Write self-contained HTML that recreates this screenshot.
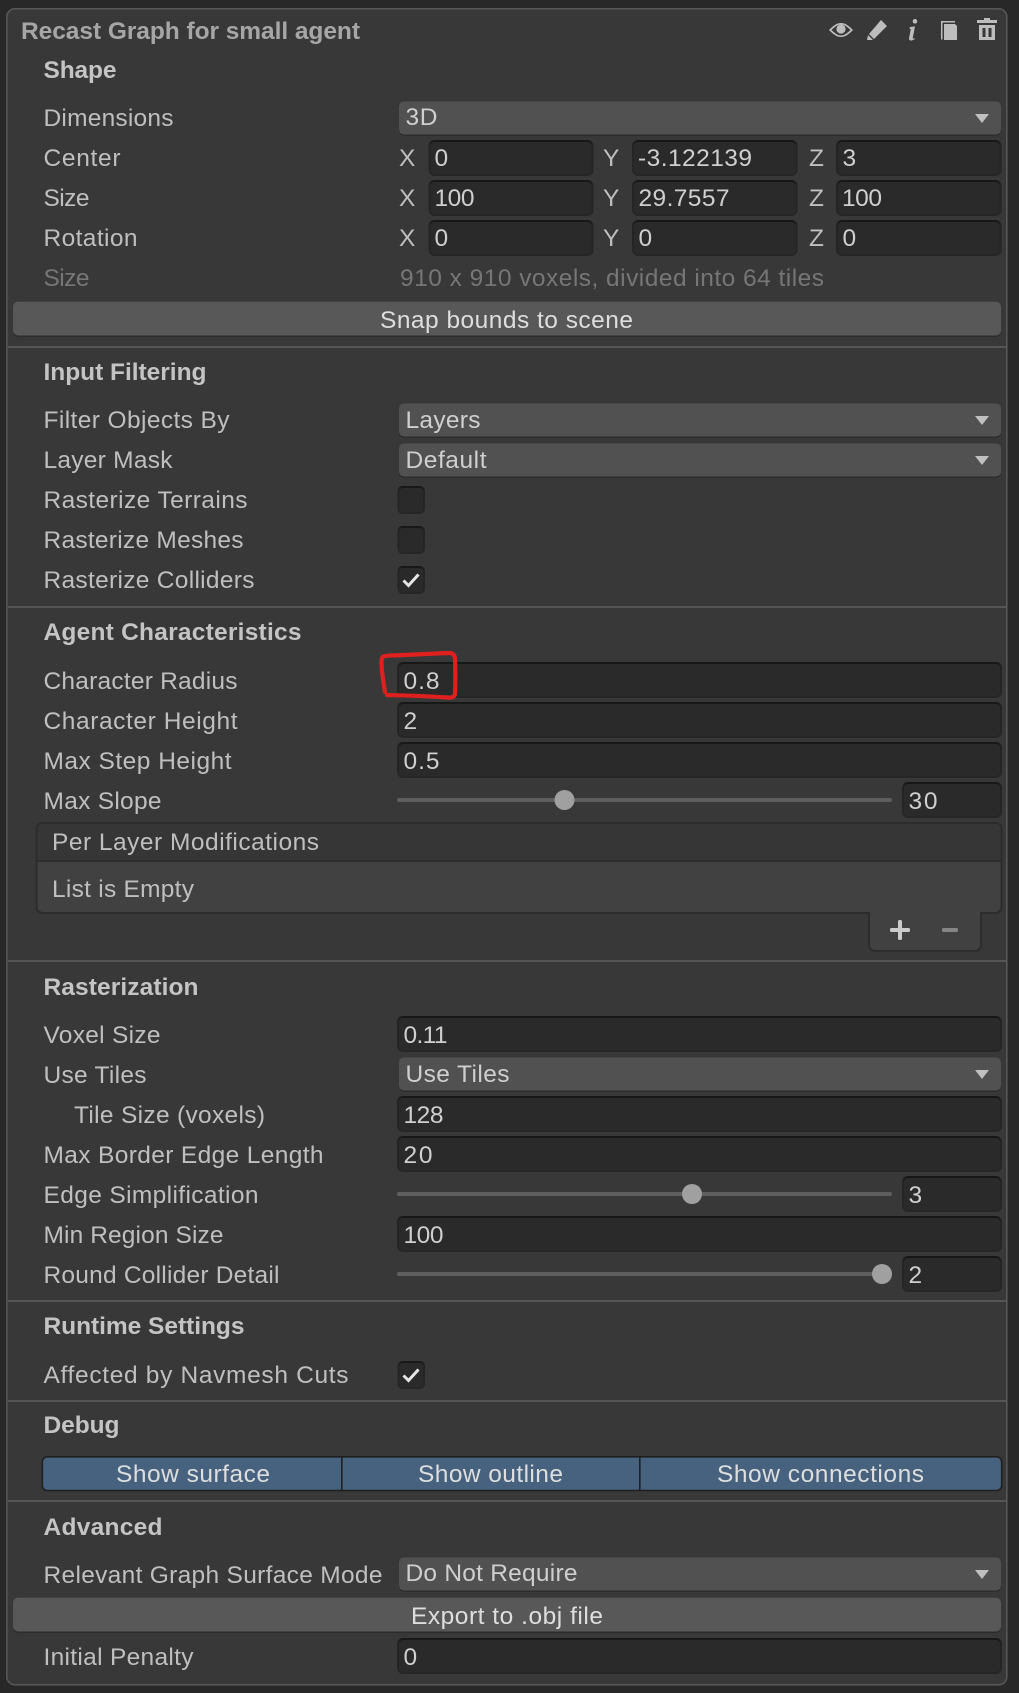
<!DOCTYPE html>
<html><head><meta charset="utf-8"><title>Recast Graph</title>
<style>
html,body{margin:0;padding:0;background:#282828;width:1019px;height:1693px;overflow:hidden}
svg{display:block}
text{font-family:"Liberation Sans",sans-serif;font-size:24.5px;fill:#bfbfbf}
.b{font-weight:bold;fill:#c4c4c4}
.t{font-weight:bold;fill:#a6a6a6}
.g{fill:#767676}
.v{fill:#cfcfcf}
.w{fill:#dedede}
.f{fill:#2a2a2a;stroke:url(#fs);stroke-width:2}
.dd{fill:#2c2c2c}
.d{fill:#515151}
.bt{fill:#585858}
.line{fill:#555555}
.tr{fill:#5e5e5e}
.th{fill:#a0a0a0}
.ar{fill:#c0c0c0}
</style></head><body>
<svg width="1019" height="1693" viewBox="0 0 1019 1693" xmlns="http://www.w3.org/2000/svg">
<defs><linearGradient id="fs" x1="0" y1="0" x2="0" y2="1"><stop offset="0" stop-color="#171717"/><stop offset=".12" stop-color="#232323"/><stop offset="1" stop-color="#262626"/></linearGradient></defs>
<rect width="1019" height="1693" fill="#282828"/>
<rect x="6.800" y="8.800" width="1000" height="1676" rx="8" fill="#383838" stroke="#565656" stroke-width="1.600"/>

<!-- header -->
<text class="t" x="21" y="39" textLength="339">Recast Graph for small agent</text>
<g fill="#bdbdbd">
<path fill-rule="evenodd" d="M829 30c5-5 8-7 12-7s7 2 12 7c-5 5-8 7-12 7s-7-2-12-7zm2.500 0c4 4 7 5.500 9.500 5.500s5.500-1.500 9.500-5.500c-4-4-7-5.500-9.500-5.500s-5.500 1.500-9.500 5.500z"/>
<circle cx="841" cy="29" r="4.600"/>
<path d="M881 20l6 6-13 13-5-5zM868 35l5 5-6 0z"/>
<path d="M915 19a2.300 2.300 0 1 1-.1 4.600a2.300 2.300 0 0 1 .1-4.600zM910 27l5-.6-2.200 11.500c-.1 1 .6 1 1.700.2l.5.7c-2 2-6 3-6-.5l1.800-9.400-1.500-.3z"/>
<path d="M941 21h14v1.500h-12.500v17h-1.500zM944 24h11l2 2v14h-13z"/>
<path fill-rule="evenodd" d="M984 18h6v2h7v3h-20v-3h7zM979 25h16v15h-16zm3.500 3v9h3v-9zm6 0v9h3v-9z"/>
</g>

<!-- Shape -->
<text class="b" x="43.500" y="78" textLength="73">Shape</text>
<text x="43.500" y="126" textLength="130">Dimensions</text>
<rect class="dd" x="399" y="102" width="602" height="34" rx="5"/><rect class="d" x="399" y="101.500" width="602" height="33" rx="5"/>
<text class="v" x="405.500" y="125" textLength="32">3D</text>
<path class="ar" d="M975 114h14l-7 9z"/>

<text x="43.500" y="166" textLength="77">Center</text>
<text x="43.500" y="206" textLength="46">Size</text>
<text x="43.500" y="246" textLength="94">Rotation</text>
<text class="g" x="43.500" y="286" textLength="46">Size</text>

<g>
<text x="399" y="166" textLength="16">X</text><text x="399" y="206" textLength="16">X</text><text x="399" y="246" textLength="16">X</text>
<text x="603" y="166" textLength="16">Y</text><text x="603" y="206" textLength="16">Y</text><text x="603" y="246" textLength="16">Y</text>
<text x="809" y="166" textLength="14">Z</text><text x="809" y="206" textLength="14">Z</text><text x="809" y="246" textLength="14">Z</text>
</g>
<rect class="f" x="429.500" y="141" width="163" height="34" rx="5"/><rect class="f" x="633" y="141" width="163.500" height="34" rx="5"/><rect class="f" x="837" y="141" width="163.500" height="34" rx="5"/>
<rect class="f" x="429.500" y="181" width="163" height="34" rx="5"/><rect class="f" x="633" y="181" width="163.500" height="34" rx="5"/><rect class="f" x="837" y="181" width="163.500" height="34" rx="5"/>
<rect class="f" x="429.500" y="221" width="163" height="34" rx="5"/><rect class="f" x="633" y="221" width="163.500" height="34" rx="5"/><rect class="f" x="837" y="221" width="163.500" height="34" rx="5"/>
<text class="v" x="434.500" y="166">0</text><text class="v" x="638" y="166" textLength="114">-3.122139</text><text class="v" x="842.500" y="166">3</text>
<text class="v" x="434.500" y="206" textLength="40">100</text><text class="v" x="638.500" y="206" textLength="91">29.7557</text><text class="v" x="842" y="206" textLength="40">100</text>
<text class="v" x="434.500" y="246">0</text><text class="v" x="638.500" y="246">0</text><text class="v" x="842.500" y="246">0</text>

<text class="g" x="400" y="286" textLength="424">910 x 910 voxels, divided into 64 tiles</text>
<rect class="dd" x="13" y="301" width="988" height="36" rx="5"/><rect class="bt" x="13" y="301.500" width="988" height="34" rx="5"/>
<text class="w" x="380" y="328" textLength="253">Snap bounds to scene</text>

<rect class="line" x="8" y="346" width="998" height="2"/>

<!-- Input Filtering -->
<text class="b" x="43.500" y="380" textLength="163">Input Filtering</text>
<text x="43.500" y="428" textLength="186">Filter Objects By</text>
<text x="43.500" y="468" textLength="129">Layer Mask</text>
<text x="43.500" y="508" textLength="204">Rasterize Terrains</text>
<text x="43.500" y="548" textLength="200">Rasterize Meshes</text>
<text x="43.500" y="588" textLength="211">Rasterize Colliders</text>
<rect class="dd" x="399" y="404" width="602" height="34" rx="5"/><rect class="d" x="399" y="403.500" width="602" height="33" rx="5"/>
<text class="v" x="405.500" y="428" textLength="75">Layers</text><path class="ar" d="M975 416h14l-7 9z"/>
<rect class="dd" x="399" y="444" width="602" height="34" rx="5"/><rect class="d" x="399" y="443.500" width="602" height="33" rx="5"/>
<text class="v" x="405.500" y="468" textLength="81">Default</text><path class="ar" d="M975 456h14l-7 9z"/>
<rect class="f" x="398.500" y="487" width="25.500" height="26" rx="4"/>
<rect class="f" x="398.500" y="527" width="25.500" height="26" rx="4"/>
<rect class="f" x="398.500" y="567" width="25.500" height="26" rx="4"/>
<path d="M403.500 580.500l5 5 10-11" fill="none" stroke="#e6e6e6" stroke-width="3"/>

<rect class="line" x="8" y="606" width="998" height="2"/>

<!-- Agent -->
<text class="b" x="43.500" y="640" textLength="258">Agent Characteristics</text>
<text x="43.500" y="689" textLength="194">Character Radius</text>
<text x="43.500" y="729" textLength="194">Character Height</text>
<text x="43.500" y="769" textLength="188">Max Step Height</text>
<text x="43.500" y="809" textLength="118">Max Slope</text>
<rect class="f" x="398" y="663" width="603" height="34" rx="5"/>
<rect class="f" x="398" y="703" width="603" height="34" rx="5"/>
<rect class="f" x="398" y="743" width="603" height="34" rx="5"/>
<text class="v" x="403.500" y="689" textLength="36">0.8</text>
<text class="v" x="403.500" y="729">2</text>
<text class="v" x="403.500" y="769" textLength="36">0.5</text>
<rect class="tr" x="397" y="798" width="495" height="4" rx="2"/>
<circle class="th" cx="564.500" cy="800" r="10"/>
<rect class="f" x="903" y="783" width="98" height="34" rx="5"/>
<text class="v" x="908.500" y="809" textLength="29">30</text>

<!-- list -->
<path d="M869 912v33a6 6 0 0 0 6 6h100a6 6 0 0 0 6-6v-33z" fill="#414141" stroke="#2c2c2c" stroke-width="2"/>
<rect x="36.500" y="823" width="965" height="90" rx="6" fill="#414141" stroke="#2c2c2c" stroke-width="2"/>
<path d="M37.500 860v-31a5 5 0 0 1 5-5h953a5 5 0 0 1 5 5v31z" fill="#363636"/>
<rect x="36.500" y="860" width="965" height="2" fill="#2c2c2c"/>
<rect x="870" y="911" width="110" height="4" fill="#414141"/>
<text x="52" y="850" textLength="267">Per Layer Modifications</text>
<text x="52" y="897" textLength="142">List is Empty</text>
<rect x="890" y="928" width="20" height="4" rx="1.500" fill="#cbcbcb"/><rect x="898" y="920" width="4" height="20" rx="1.500" fill="#cbcbcb"/>
<rect x="942" y="928" width="16" height="4" rx="1.500" fill="#858585"/>

<rect class="line" x="8" y="960" width="998" height="2"/>

<!-- Rasterization -->
<text class="b" x="43.500" y="995" textLength="155">Rasterization</text>
<text x="43.500" y="1043" textLength="117">Voxel Size</text>
<text x="43.500" y="1083" textLength="103">Use Tiles</text>
<text x="74" y="1123" textLength="191">Tile Size (voxels)</text>
<text x="43.500" y="1163" textLength="280">Max Border Edge Length</text>
<text x="43.500" y="1203" textLength="215">Edge Simplification</text>
<text x="43.500" y="1243" textLength="180">Min Region Size</text>
<text x="43.500" y="1283" textLength="236">Round Collider Detail</text>
<rect class="f" x="398" y="1017" width="603" height="34" rx="5"/>
<text class="v" x="403.500" y="1043" textLength="44">0.11</text>
<rect class="dd" x="399" y="1058" width="602" height="34" rx="5"/><rect class="d" x="399" y="1057.500" width="602" height="33" rx="5"/>
<text class="v" x="405.500" y="1082" textLength="104">Use Tiles</text><path class="ar" d="M975 1070h14l-7 9z"/>
<rect class="f" x="398" y="1097" width="603" height="34" rx="5"/>
<text class="v" x="403.500" y="1123" textLength="40">128</text>
<rect class="f" x="398" y="1137" width="603" height="34" rx="5"/>
<text class="v" x="403.500" y="1163" textLength="29">20</text>
<rect class="tr" x="397" y="1192" width="495" height="4" rx="2"/>
<circle class="th" cx="692" cy="1194" r="10"/>
<rect class="f" x="903" y="1177" width="98" height="34" rx="5"/>
<text class="v" x="908.500" y="1203">3</text>
<rect class="f" x="398" y="1217" width="603" height="34" rx="5"/>
<text class="v" x="403.500" y="1243" textLength="40">100</text>
<rect class="tr" x="397" y="1272" width="495" height="4" rx="2"/>
<circle class="th" cx="882" cy="1274" r="10"/>
<rect class="f" x="903" y="1257" width="98" height="34" rx="5"/>
<text class="v" x="908.500" y="1283">2</text>

<rect class="line" x="8" y="1300" width="998" height="2"/>

<!-- Runtime -->
<text class="b" x="43.500" y="1334" textLength="201">Runtime Settings</text>
<text x="43.500" y="1383" textLength="305">Affected by Navmesh Cuts</text>
<rect class="f" x="398.500" y="1362" width="25.500" height="26" rx="4"/>
<path d="M403.500 1375.500l5 5 10-11" fill="none" stroke="#e6e6e6" stroke-width="3"/>

<rect class="line" x="8" y="1400" width="998" height="2"/>

<!-- Debug -->
<text class="b" x="43.500" y="1433" textLength="76">Debug</text>
<rect x="42.300" y="1456.800" width="959.400" height="33.700" rx="5" fill="#46627f" stroke="#1f1f1f" stroke-width="1.600"/>
<rect x="341" y="1457" width="1.600" height="33" fill="#1f1f1f"/>
<rect x="639" y="1457" width="1.600" height="33" fill="#1f1f1f"/>
<text class="w" x="116" y="1482" textLength="154">Show surface</text>
<text class="w" x="418" y="1482" textLength="145">Show outline</text>
<text class="w" x="717" y="1482" textLength="207">Show connections</text>

<rect class="line" x="8" y="1500" width="998" height="2"/>

<!-- Advanced -->
<text class="b" x="43.500" y="1535" textLength="119">Advanced</text>
<text x="43.500" y="1583" textLength="339">Relevant Graph Surface Mode</text>
<rect class="dd" x="399" y="1558" width="602" height="34" rx="5"/><rect class="d" x="399" y="1557.500" width="602" height="33" rx="5"/>
<text class="v" x="405.500" y="1581" textLength="172">Do Not Require</text><path class="ar" d="M975 1570h14l-7 9z"/>
<rect class="dd" x="13" y="1597" width="988" height="36" rx="5"/><rect class="bt" x="13" y="1597.500" width="988" height="34" rx="5"/>
<text class="w" x="411" y="1624" textLength="192">Export to .obj file</text>
<text x="43.500" y="1665" textLength="150">Initial Penalty</text>
<rect class="f" x="398" y="1639" width="603" height="34" rx="5"/>
<text class="v" x="403.500" y="1665">0</text>

<!-- red annotation -->
<path d="M385 692C383 680 381 668 381.500 660C382 656 384 656 390 655.500C410 655 432 653.500 449 653C453 653 455 655 455 659C455.500 672 455.500 684 455 694C454.500 697 452 698 447 697.500C428 696 405 695.500 387 695" fill="none" stroke="#e0201f" stroke-width="4.200" stroke-linecap="round"/>
</svg>
</body></html>
